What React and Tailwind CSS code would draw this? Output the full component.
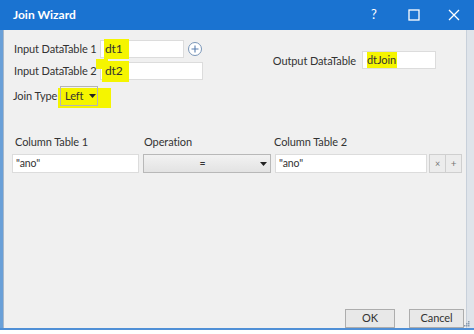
export default function App() {
  const font = { fontFamily: 'Lato, "Noto Sans", sans-serif' };
  return (
    <div className="w-[474px] h-[334px] bg-white overflow-hidden flex flex-col" style={font}>
      {/* Title bar */}
      <div className="h-[30px] bg-[#1a73d1] flex items-center pl-[13px] pr-[14px] text-white shrink-0">
        <span className="text-[12px] font-bold">Join Wizard</span>
        <div className="ml-auto flex items-center gap-[28px]">
          <span className="text-[13px] w-[12px] text-center">?</span>
          <svg width="12" height="12" viewBox="0 0 12 12">
            <rect x="1" y="1" width="10" height="10" fill="none" stroke="white" strokeWidth="1.3" />
          </svg>
          <svg width="12" height="12" viewBox="0 0 12 12">
            <path d="M1 1 L11 11 M11 1 L1 11" stroke="white" strokeWidth="1.3" />
          </svg>
        </div>
      </div>
      {/* Body */}
      <div className="h-[298px] flex border-l-[3px] border-[#6aa0d8] shrink-0 relative">
        <div className="flex-1 bg-[#f0f0f0] border-l border-[#a9b8c9] flex flex-col text-[11px] text-[#333] tracking-[-0.1px]">
          {/* top form */}
          <div className="flex pt-[10px]">
            <div className="flex flex-col pl-[10px]">
              <div className="flex items-center h-[18px]">
                <span className="w-[86px] whitespace-nowrap">Input DataTable 1</span>
                <div className="w-[84px] h-[18px] bg-white border border-[#dcdcdc] flex items-center pl-[3px]">
                  <span className="bg-[#f5f500] pl-[1px] h-[20px] flex items-center w-[25px] -mt-[1px] text-[12px]">dt1</span>
                </div>
                <svg width="16" height="16" viewBox="0 0 16 16" className="ml-[3px]">
                  <circle cx="8" cy="8" r="6.5" fill="white" stroke="#7a96b8" strokeWidth="1" />
                  <path d="M8 4.5 V11.5 M4.5 8 H11.5" stroke="#5a7fb0" strokeWidth="1.1" />
                </svg>
              </div>
              <div className="flex items-center h-[18px] mt-[4px]">
                <span className="w-[86px] whitespace-nowrap">Input DataTable 2</span>
                <div className="w-[103px] h-[18px] bg-white border border-[#dcdcdc] flex items-center pl-[3px] relative">
                  <span className="absolute -left-[5px] -top-[4px] w-[12px] h-[10px] bg-[#f5f500]"></span>
                  <span className="relative bg-[#f5f500] h-[21px] w-[27px] -ml-[2px] flex items-center pl-[3px] text-[12px]">dt2</span>
                </div>
              </div>
              <div className="flex items-center h-[20px] mt-[6px]">
                <span className="w-[47px] -ml-[1px] whitespace-nowrap">Join Type</span>
                <div className="relative">
                  <div className="absolute -left-[2px] top-[2px] w-[53px] h-[20px] bg-[#f5f500]"></div>
                  <div className="relative w-[38px] h-[20px] border border-[#b5b5b5] flex items-center pl-[4px] gap-[6px] text-[11px]">
                    <span>Left</span>
                    <svg width="7" height="4" viewBox="0 0 7 4"><path d="M0 0 H7 L3.5 4 Z" fill="#222" /></svg>
                  </div>
                </div>
              </div>
            </div>
            <div className="ml-auto flex items-start pt-[11px] pr-[30px]">
              <span className="mt-[2px] mr-[6px] whitespace-nowrap">Output DataTable</span>
              <div className="w-[74px] h-[18px] bg-white border border-[#dcdcdc] flex items-center pl-[4px]">
                <span className="bg-[#f5f500] h-[16px] flex items-center text-[11px] pr-[1px]">dtJoin</span>
              </div>
            </div>
          </div>
          {/* columns */}
          <div className="flex mt-[29px] pl-[8px] h-[14px] items-center">
            <span className="w-[131px] pl-[3px]">Column Table 1</span>
            <span className="w-[131px] pl-[1px]">Operation</span>
            <span>Column Table 2</span>
          </div>
          <div className="flex items-center mt-[5px] pl-[8px] h-[19px]">
            <div className="w-[127px] h-[19px] bg-white border border-[#dcdcdc] flex items-center pl-[3px] text-[10.5px]">"ano"</div>
            <div className="ml-[4px] w-[128px] h-[19px] border border-[#b8b8b8] bg-gradient-to-b from-[#f2f2f2] to-[#e3e3e3] flex items-center relative text-[10.5px]">
              <span className="flex-1 text-center pl-[1px]">=</span>
              <svg width="7" height="4" viewBox="0 0 7 4" className="mr-[3px]"><path d="M0 0 H7 L3.5 4 Z" fill="#222" /></svg>
            </div>
            <div className="ml-[4px] w-[152px] h-[19px] bg-white border border-[#dcdcdc] flex items-center pl-[3px] text-[10.5px]">"ano"</div>
            <div className="ml-[2px] w-[17px] h-[19px] border border-[#cfcfcf] bg-[#ececec] flex items-center justify-center text-[9px] text-[#777]">×</div>
            <div className="w-[16px] h-[19px] border border-l-0 border-[#cfcfcf] bg-[#ececec] flex items-center justify-center text-[10px] text-[#777]">+</div>
          </div>
          {/* bottom */}
          <div className="mt-auto flex justify-end items-end pb-[0px] pr-[2px]">
            <div className="w-[50px] h-[19px] border border-[#adadad] bg-[#e8e8e8] flex items-center justify-center text-[11px]">OK</div>
            <div className="ml-[14px] w-[55px] h-[19px] border border-[#adadad] bg-[#e8e8e8] flex items-center justify-center text-[11px]">Cancel</div>
          </div>
        </div>
        <div className="w-[8px] bg-[#dfe4ea] border-l border-[#c8d0da]"></div>
        <svg width="6" height="6" viewBox="0 0 6 6" className="absolute right-[4px] bottom-[1px]">
          <rect x="4" y="0" width="1.5" height="1.5" fill="#8a9bb0" />
          <rect x="2" y="2" width="1.5" height="1.5" fill="#8a9bb0" />
          <rect x="4" y="2" width="1.5" height="1.5" fill="#8a9bb0" />
          <rect x="0" y="4" width="1.5" height="1.5" fill="#8a9bb0" />
          <rect x="2" y="4" width="1.5" height="1.5" fill="#8a9bb0" />
          <rect x="4" y="4" width="1.5" height="1.5" fill="#8a9bb0" />
        </svg>
      </div>
      <div className="h-[2px] bg-[#4f8fd6] shrink-0"></div>
    </div>
  );
}
